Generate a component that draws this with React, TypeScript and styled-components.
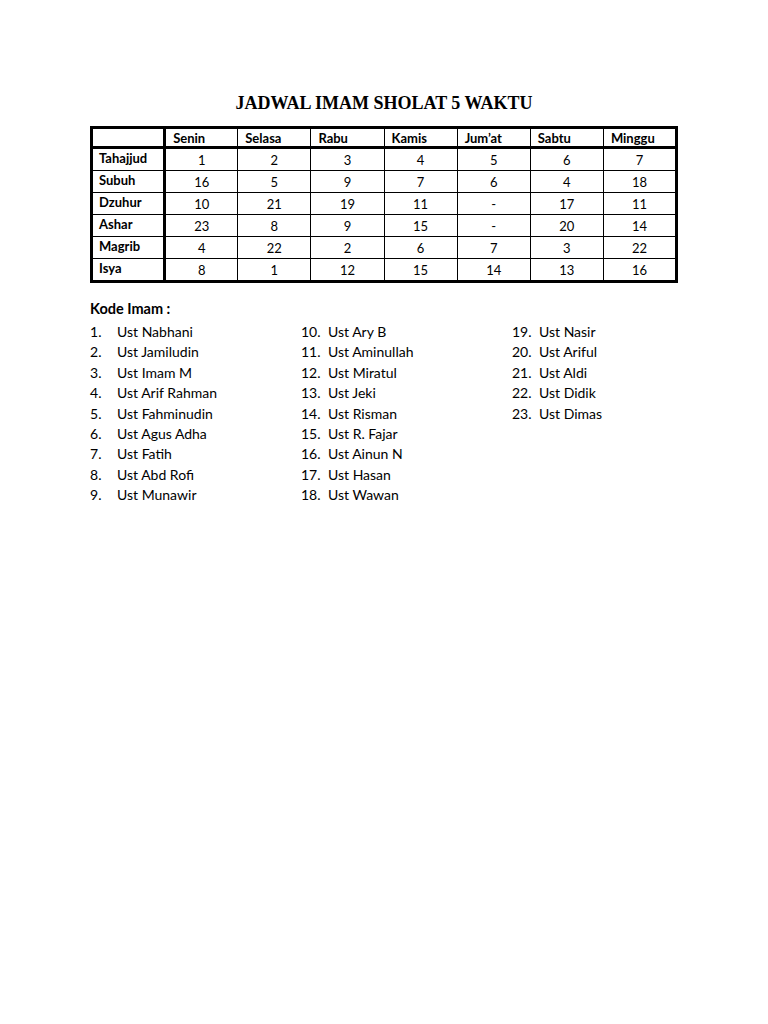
import styled, { createGlobalStyle } from 'styled-components';

const GlobalStyle = createGlobalStyle`
  html, body {
    margin: 0;
    padding: 0;
    background: #fff;
  }
  body {
    font-family: Lato, 'Liberation Sans', sans-serif;
    color: #000;
  }
`;

const Page = styled.div`
  width: 768px;
  min-height: 1024px;
  background: #fff;
  padding: 92px 90px 0;
  box-sizing: border-box;
`;

const Title = styled.h1`
  font-family: 'Liberation Serif', 'Times New Roman', serif;
  font-weight: 700;
  font-size: 18px;
  line-height: 22px;
  text-align: center;
  margin: 0 0 12px;
`;

const Schedule = styled.table`
  width: 588px;
  border-collapse: collapse;
  border: 3px solid #000;
  table-layout: fixed;
  font-size: 13px;
  line-height: 16px;
`;

const HeadCell = styled.th`
  text-align: left;
  font-weight: 700;
  padding: 0 7px;
  height: 17px;
  border: 1px solid #000;
  border-bottom: 3px solid #000;
  &:first-child {
    border-right: 3px solid #000;
  }
`;

const RowLabel = styled.th`
  text-align: left;
  font-weight: 700;
  padding: 0 6px 3px;
  height: 18px;
  vertical-align: middle;
  border: 1px solid #000;
  border-right: 3px solid #000;
`;

const Cell = styled.td`
  text-align: center;
  padding: 2px 0 1px;
  height: 18px;
  vertical-align: middle;
  border: 1px solid #000;
`;

const KodeTitle = styled.h2`
  font-size: 14.5px;
  font-weight: 700;
  margin: 16px 0 3px;
  line-height: 20px;
`;

const ImamGrid = styled.div`
  display: grid;
  grid-template-columns: 211px 211px 211px;
`;

const ImamList = styled.ol`
  list-style: none;
  margin: 0;
  padding: 0;
  font-size: 14px;
`;

const ImamItem = styled.li`
  display: flex;
  line-height: 20.4px;
`;

const ImamNumber = styled.span`
  width: 27px;
  flex: none;
`;

const days = ['Senin', 'Selasa', 'Rabu', 'Kamis', 'Jum\u2019at', 'Sabtu', 'Minggu'];

const rows: { name: string; values: string[] }[] = [
  { name: 'Tahajjud', values: ['1', '2', '3', '4', '5', '6', '7'] },
  { name: 'Subuh', values: ['16', '5', '9', '7', '6', '4', '18'] },
  { name: 'Dzuhur', values: ['10', '21', '19', '11', '-', '17', '11'] },
  { name: 'Ashar', values: ['23', '8', '9', '15', '-', '20', '14'] },
  { name: 'Magrib', values: ['4', '22', '2', '6', '7', '3', '22'] },
  { name: 'Isya', values: ['8', '1', '12', '15', '14', '13', '16'] },
];

const imams = [
  'Ust Nabhani', 'Ust Jamiludin', 'Ust Imam M', 'Ust Arif Rahman', 'Ust Fahminudin',
  'Ust Agus Adha', 'Ust Fatih', 'Ust Abd Rofi', 'Ust Munawir', 'Ust Ary B',
  'Ust Aminullah', 'Ust Miratul', 'Ust Jeki', 'Ust Risman', 'Ust R. Fajar',
  'Ust Ainun N', 'Ust Hasan', 'Ust Wawan', 'Ust Nasir', 'Ust Ariful',
  'Ust Aldi', 'Ust Didik', 'Ust Dimas',
];

const columns = [imams.slice(0, 9), imams.slice(9, 18), imams.slice(18)];
const starts = [1, 10, 19];

const App = () => {
  return (
    <Page>
      <GlobalStyle />
      <Title>JADWAL IMAM SHOLAT 5 WAKTU</Title>
      <Schedule>
        <thead>
          <tr>
            <HeadCell />
            {days.map(day => (
              <HeadCell key={day}>{day}</HeadCell>
            ))}
          </tr>
        </thead>
        <tbody>
          {rows.map(row => (
            <tr key={row.name}>
              <RowLabel>{row.name}</RowLabel>
              {row.values.map((v, i) => (
                <Cell key={i}>{v}</Cell>
              ))}
            </tr>
          ))}
        </tbody>
      </Schedule>

      <KodeTitle>Kode Imam :</KodeTitle>
      <ImamGrid>
        {columns.map((col, c) => (
          <ImamList key={c}>
            {col.map((name, i) => (
              <ImamItem key={name}>
                <ImamNumber>{starts[c] + i}.</ImamNumber>
                {name}
              </ImamItem>
            ))}
          </ImamList>
        ))}
      </ImamGrid>
    </Page>
  );
};

export default App;
